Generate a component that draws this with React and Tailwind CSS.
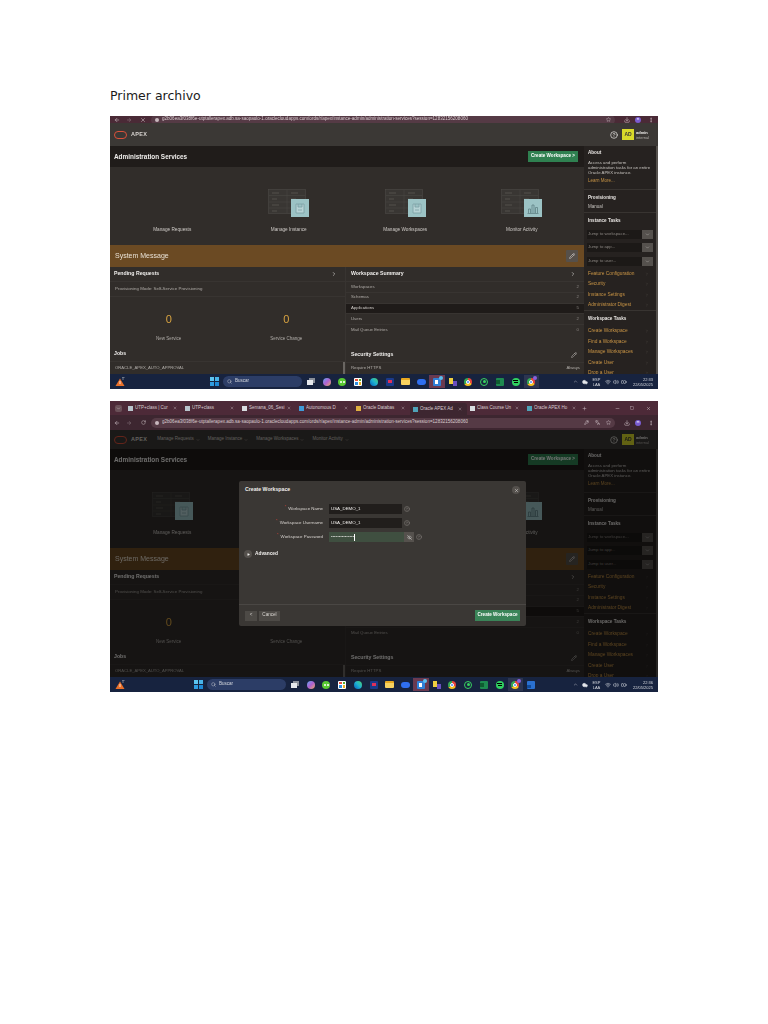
import {
  ArrowLeft, ArrowRight, BatteryCharging, ChevronDown, ChevronRight, ChevronUp, CircleHelp, Cloud,
  Download, EllipsisVertical, EyeOff, KeyRound, Languages, Minus, Pencil, Play, Plus, RotateCw,
  Search, Square, Star, Volume2, Wifi, X,
} from 'lucide-react';

const URL_TEXT = 'g2b06ea3f038f6e-utptallerapex.adb.sa-saopaulo-1.oraclecloudapps.com/ords/r/apex/instance-admin/administration-services?session=12832156208060';

const TABS = [
  { title: 'UTP+class | Cur', color: 'bg-[#b8c4cc]' },
  { title: 'UTP+class', color: 'bg-[#b8c4cc]' },
  { title: 'Semana_06_Sesi', color: 'bg-[#d8dde0]' },
  { title: 'Autonomous D', color: 'bg-[#3f9bd8]' },
  { title: 'Oracle Databas', color: 'bg-[#e0b040]' },
  { title: 'Oracle APEX Ad', color: 'bg-[#4fa3b8]', active: true },
  { title: 'Class Course Un', color: 'bg-[#d8dde0]' },
  { title: 'Oracle APEX Ho', color: 'bg-[#4fa3b8]' },
];

const SIDE_LINKS = ['Feature Configuration', 'Security', 'Instance Settings', 'Administrator Digest'];
const WORKSPACE_LINKS = ['Create Workspace', 'Find a Workspace', 'Manage Workspaces', 'Create User', 'Drop a User'];
const SUMMARY = [
  { label: 'Workspaces', value: 2 },
  { label: 'Schemas', value: 2 },
  { label: 'Applications', value: 5, active: true },
  { label: 'Users', value: 2 },
  { label: 'Mail Queue Entries', value: 0 },
];

function Thumb({ variant, hidden }) {
  return (
    <svg width="41" height="28" viewBox="0 0 41 28" className={hidden ? 'opacity-0' : ''}>
      <rect x="0.5" y="0.5" width="37" height="24" fill="#393633" stroke="#4d4a46" strokeWidth="0.6" />
      <path d="M1 6.5H37M1 13H37M1 19H37M19 1V24" stroke="#4d4a46" strokeWidth="0.5" />
      <path d="M4 4H11M4 10H9M4 16H11M4 22H9M23 4H30M23 10H28M23 16H31" stroke="#5f5b57" strokeWidth="0.7" />
      <rect x="23" y="10" width="18" height="18" fill="#9cc3c5" />
      {variant === 'chart' ? (
        <path d="M27.5 24V20H29.5V24M31 24V16H33V24M34.5 24V18.5H36.5V24M26.5 24.5H37.5" fill="none" stroke="#5f8285" strokeWidth="0.8" />
      ) : (
        <path d="M28 15H36V24H28ZM30 15V18H34V15M30 21H34" fill="#b6d3d5" stroke="#7ba0a3" strokeWidth="0.8" />
      )}
    </svg>
  );
}

function AppIcon({ kind }) {
  if (kind === 'view') return <div className="relative h-[7px] w-[8px]"><div className="absolute left-[2px] top-0 h-[5px] w-[6px] bg-[#8a8f99]" /><div className="absolute bottom-0 left-0 h-[5px] w-[6px] bg-[#e6e8ec]" /></div>;
  if (kind === 'copilot') return <div className="h-[8px] w-[8px] rounded-full bg-gradient-to-br from-[#3fa0f0] via-[#b060d0] to-[#f0a040]" />;
  if (kind === 'owl') return <div className="flex h-[8px] w-[8px] items-center justify-center gap-[1px] rounded-full bg-[#58c832]"><span className="h-[2px] w-[2px] rounded-full bg-white" /><span className="h-[2px] w-[2px] rounded-full bg-white" /></div>;
  if (kind === 'store') return <div className="grid h-[8px] w-[8px] grid-cols-2 gap-[1px] rounded-[1px] bg-white p-[1px]"><span className="bg-[#e8503a]" /><span className="bg-[#58b030]" /><span className="bg-[#3090e0]" /><span className="bg-[#f0b020]" /></div>;
  if (kind === 'edge') return <div className="h-[8px] w-[8px] rounded-full bg-gradient-to-tr from-[#1060c0] via-[#20b0d0] to-[#50d060]" />;
  if (kind === 'jet') return <div className="flex h-[8px] w-[8px] items-center justify-center rounded-[1px] bg-[#1b3a8a]"><span className="h-[3px] w-[4px] bg-[#e0305a]" /></div>;
  if (kind === 'folder') return <div className="h-[7px] w-[9px] rounded-[1px] border-t-2 border-[#e8a820] bg-[#f8d260]" />;
  if (kind === 'zoom') return <div className="h-[6px] w-[9px] rounded-full bg-[#2f6ff0]" />;
  if (kind === 'teams') return <div className="relative flex h-[8px] w-[8px] items-center justify-center rounded-[1px] bg-[#2f80d8]"><span className="h-[4px] w-[3px] bg-white" /><span className="absolute -right-[2px] -top-[2px] h-[4px] w-[4px] rounded-full bg-[#5cc0f0]" /></div>;
  if (kind === 'sticky') return <div className="relative h-[8px] w-[8px]"><div className="absolute left-0 top-0 h-[6px] w-[4px] bg-[#f0d040]" /><div className="absolute bottom-0 right-0 h-[5px] w-[4px] bg-[#6a50c0]" /></div>;
  if (kind === 'chrome' || kind === 'chromeProfile') return <div className="relative h-[8px] w-[8px] rounded-full bg-[conic-gradient(#e8453c_0_33%,#f4c020_33%_66%,#34a853_66%)]"><div className="absolute left-[2px] top-[2px] h-[4px] w-[4px] rounded-full border border-white bg-[#4285f4]" />{kind === 'chromeProfile' && <span className="absolute -right-[2px] -top-[2px] h-[4px] w-[4px] rounded-full bg-[#8a60e0]" />}</div>;
  if (kind === 'whats') return <div className="flex h-[8px] w-[8px] items-center justify-center rounded-full border border-[#38d060]"><span className="h-[3px] w-[3px] rounded-full bg-[#38d060]" /></div>;
  if (kind === 'excel') return <div className="relative h-[8px] w-[8px] rounded-[1px] bg-[#1e8a50]"><span className="absolute left-0 top-[2px] h-[4px] w-[4px] bg-[#0e5c30]" /></div>;
  if (kind === 'spotify') return <div className="flex h-[8px] w-[8px] flex-col items-center justify-center gap-[1px] rounded-full bg-[#30d060]"><span className="h-[0.6px] w-[5px] bg-black" /><span className="h-[0.6px] w-[4px] bg-black" /></div>;
  return <div className="relative h-[8px] w-[8px] rounded-[1px] bg-[#2a70d0]"><span className="absolute bottom-[1px] left-0 h-[3px] w-[4px] bg-[#104a9a]" /></div>;
}

const APPS = ['view', 'copilot', 'owl', 'store', 'edge', 'jet', 'folder', 'zoom', 'teams', 'sticky', 'chrome', 'whats', 'excel', 'spotify', 'chromeProfile'];

function Taskbar({ startGap, time, extraApp }) {
  const apps = extraApp ? [...APPS, 'word'] : APPS;
  return (
    <div className="flex h-[15px] items-center bg-[#17233f] text-[#d5d8de]">
      <svg width="10" height="10" viewBox="0 0 10 10" className="ml-[5px] shrink-0">
        <path d="M5 1.5L9.5 9H0.5Z" fill="#e8702a" />
        <path d="M5 4V7" stroke="#fff" strokeWidth="0.8" />
        <path d="M7 0.5H9.5M7 2H9" stroke="#c8ccd4" strokeWidth="0.5" />
      </svg>
      <div className={`grid h-[9px] w-[9px] shrink-0 grid-cols-2 gap-[0.5px] ${startGap}`}>
        <span className="bg-[#5cc4f0]" /><span className="bg-[#48b4ea]" /><span className="bg-[#2f9ce0]" /><span className="bg-[#1e88d4]" />
      </div>
      <div className="ml-[4px] flex h-[11px] w-[79px] shrink-0 items-center gap-[3px] rounded-full bg-[#2c3d66] pl-[4px] text-[4.5px]">
        <Search size={5} />
        <span>Buscar</span>
      </div>
      <div className="ml-[1px] flex shrink-0">
        {apps.map((app, i) => (
          <div key={i} className={`flex h-[13px] w-[15.75px] items-center justify-center ${app === 'teams' ? 'bg-[#6a3a50]' : ''} ${app === 'chromeProfile' ? 'bg-[#2c3550]' : ''}`}>
            <AppIcon kind={app} />
          </div>
        ))}
      </div>
      <div className="ml-auto flex items-center pr-[5px]">
        <ChevronUp size={5} className="mr-[4px]" />
        <Cloud size={6} fill="#e5e7eb" className="mr-[4px]" />
        <div className="mr-[4px] w-[9px] text-center text-[4px] leading-[5px]">ESP<br />LAA</div>
        <Wifi size={6} className="mr-[2px]" />
        <Volume2 size={6} className="mr-[2px]" />
        <BatteryCharging size={6} className="mr-[6px]" />
        <div className="text-right text-[4px] leading-[5px]">{time}<br />22/05/2025</div>
      </div>
    </div>
  );
}

function BrowserTabs() {
  return (
    <div className="flex h-[14px] items-center bg-[#4d2a38] pl-[5px] text-[4.5px] text-[#d9ccd0]">
      <div className="mr-[3px] flex h-[7px] w-[7px] items-center justify-center rounded-[2px] bg-[#6a5058]"><ChevronDown size={5} /></div>
      {TABS.map((tab) => (
        <div key={tab.title} className={`flex h-[12px] w-[57px] shrink-0 items-center gap-[2px] rounded-t-[3px] px-[3px] ${tab.active ? 'mt-[2px] bg-[#3d2630]' : ''}`}>
          <span className={`h-[5px] w-[5px] shrink-0 ${tab.color}`} />
          <span className="flex-1 truncate">{tab.title}</span>
          <X size={4} className="mr-[2px] shrink-0" />
        </div>
      ))}
      <Plus size={5} className="ml-[1px]" />
      <Minus size={5} className="ml-[28px]" />
      <Square size={4} className="ml-[10px]" />
      <X size={5} className="ml-[12px]" />
    </div>
  );
}

function AddressBar({ height, showExtras, navIcon, barColor }) {
  return (
    <div className={`flex items-center overflow-hidden pl-[3px] pr-[4px] text-[#d9ccd0] ${height} ${barColor}`}>
      <ArrowLeft size={6} className="ml-[1px]" />
      <ArrowRight size={6} className="ml-[6px] opacity-50" />
      {navIcon === 'close' ? <X size={6} className="ml-[8px]" /> : <RotateCw size={5} className="ml-[9px]" />}
      <div className="ml-[5px] flex h-[10px] w-[464px] shrink-0 items-center rounded-full bg-[#553a45] pl-[4px] text-[4.55px]">
        <span className="mr-[3px] h-[4px] w-[4px] rounded-full bg-[#c8b8be]" />
        <span className="truncate whitespace-nowrap">{URL_TEXT}</span>
        <div className="ml-auto flex items-center gap-[6px] pr-[4px]">
          {showExtras && <KeyRound size={5} />}
          {showExtras && <Languages size={5} />}
          <Star size={5} />
        </div>
      </div>
      <Download size={6} className="ml-[9px]" />
      <span className="ml-[5px] flex h-[6px] w-[6px] items-center justify-center rounded-full bg-[#7a5cd0] text-[3px] text-white">m</span>
      <EllipsisVertical size={6} className="ml-auto" />
    </div>
  );
}

function ApexHeader({ height, menu }) {
  return (
    <div className={`flex items-center bg-[#3b3835] pl-[4px] pr-[6px] text-[#f0eeec] ${height}`}>
      <div className="h-[8px] w-[13px] rounded-[4px] border-[1.3px] border-[#d9503a]" />
      <span className="ml-[4px] text-[5.5px] font-bold tracking-[0.3px] text-[#d8d4d0]">APEX</span>
      {menu && (
        <div className="ml-[10px] flex gap-[8px] text-[4.5px] text-[#d0ccc8]">
          {['Manage Requests', 'Manage Instance', 'Manage Workspaces', 'Monitor Activity'].map((item) => (
            <span key={item} className="flex items-center gap-[2px]">{item}<ChevronDown size={4} /></span>
          ))}
        </div>
      )}
      <div className="ml-auto flex items-center">
        <CircleHelp size={8} />
        <div className="ml-[4px] flex h-[11px] w-[12px] items-center justify-center bg-[#d9d92a] text-[5px] font-bold text-[#3b3835]">AD</div>
        <div className="ml-[2px] w-[16px] text-[4px] leading-[5px]">
          <div className="font-bold">admin</div>
          <div className="text-[#b0aca8]">internal</div>
        </div>
      </div>
    </div>
  );
}

function SideLink({ label }) {
  return (
    <div className="flex h-[10.5px] items-center justify-between pr-[3px] text-[4.8px] text-[#c89445]">
      <span>{label}</span>
      <ChevronRight size={4} className="text-[#5a5652]" />
    </div>
  );
}

function Sidebar() {
  return (
    <div className="h-full w-[72px] shrink-0 overflow-hidden bg-[#262220] text-[#e8e5e2]">
      <div className="h-[44px] border-b border-[#383431] px-[4px] pt-[4px]">
        <div className="h-[6px] text-[4.6px] font-bold leading-[6px]">About</div>
        <div className="mt-[3.5px] h-[16px] whitespace-nowrap text-[4.3px] leading-[5.3px] text-[#c4c0bc]">Access and perform<br />administration tasks for an entire<br />Oracle APEX instance.</div>
        <div className="mt-[2.5px] h-[6px] text-[4.5px] leading-[6px] text-[#c89445]">Learn More...</div>
      </div>
      <div className="h-[23px] border-b border-[#383431] px-[4px] pt-[4.5px]">
        <div className="h-[6px] text-[4.6px] font-bold leading-[6px]">Provisioning</div>
        <div className="mt-[3.5px] h-[6px] text-[4.5px] leading-[6px] text-[#c4c0bc]">Manual</div>
      </div>
      <div className="h-[98px] border-b border-[#383431] px-[4px] pt-[5px]">
        <div className="h-[6px] text-[4.6px] font-bold leading-[6px]">Instance Tasks</div>
        <div className="mt-[5.5px] flex flex-col gap-[4.5px]">
          {['Jump to workspace...', 'Jump to app...', 'Jump to user...'].map((item) => (
            <div key={item} className="-ml-[1px] flex h-[9px] w-[66px] items-center bg-[#1c1917] pl-[1px] text-[4.3px] text-[#8a8580]">
              <span className="flex-1">{item}</span>
              <div className="flex h-full w-[11px] items-center justify-center bg-[#55514d] text-[#c8c4c0]"><ChevronDown size={5} /></div>
            </div>
          ))}
        </div>
        <div className="mt-[2.75px]">
          {SIDE_LINKS.map((item) => <SideLink key={item} label={item} />)}
        </div>
      </div>
      <div className="px-[4px] pt-[5px]">
        <div className="h-[6px] text-[4.6px] font-bold leading-[6px]">Workspace Tasks</div>
        <div className="mt-[3.75px]">
          {WORKSPACE_LINKS.map((item) => <SideLink key={item} label={item} />)}
        </div>
      </div>
    </div>
  );
}

function PanelHeader({ title, chevron }) {
  return (
    <div className="flex h-[15px] items-center justify-between border-b border-[#383431] pl-[4px] pr-[8px] text-[5.2px] font-bold text-[#f0eeec]">
      <span>{title}</span>
      {chevron && <ChevronRight size={6} />}
    </div>
  );
}

function Counter({ label }) {
  return (
    <div className="flex flex-1 flex-col items-center pt-[15px]">
      <div className="h-[14px] text-[11px] font-medium leading-[14px] text-[#d9a441]">0</div>
      <div className="mt-[10px] text-[4.5px] leading-[6px] text-[#b0aca8]">{label}</div>
    </div>
  );
}

function ApexBody({ firstThumb }) {
  return (
    <div className="flex h-[228px] bg-[#312d2a]">
      <div className="flex w-[474px] shrink-0 flex-col">
        <div className="flex h-[21px] shrink-0 items-center justify-between bg-[#201c1a] pl-[4px] pr-[6px]">
          <span className="text-[6.4px] font-bold text-[#f0eeec]">Administration Services</span>
          <div className="flex h-[11px] w-[50px] items-center justify-center bg-[#2f8050] text-[4.6px] font-bold text-white">Create Workspace &gt;</div>
        </div>
        <div className="grid h-[78px] shrink-0 grid-cols-4 px-[4px] pt-[22px]">
          {[
            { label: 'Manage Requests', hidden: !firstThumb },
            { label: 'Manage Instance' },
            { label: 'Manage Workspaces' },
            { label: 'Monitor Activity', variant: 'chart' },
          ].map((card) => (
            <div key={card.label} className="flex flex-col items-center">
              <Thumb variant={card.variant} hidden={card.hidden} />
              <div className="mt-[9.5px] text-[4.7px] leading-[6px] text-[#cfcbc7]">{card.label}</div>
            </div>
          ))}
        </div>
        <div className="flex h-[22px] shrink-0 items-center justify-between bg-[#6b4a23] pl-[5px] pr-[6px]">
          <span className="text-[7px] text-[#e8e0d4]">System Message</span>
          <div className="flex h-[12px] w-[12px] items-center justify-center rounded-[1px] bg-[#56504a] text-[#e8e5e2]"><Pencil size={6} /></div>
        </div>
        <div className="flex flex-1">
          <div className="relative w-[236px] shrink-0 border-r border-[#383431]">
            <PanelHeader title="Pending Requests" chevron />
            <div className="flex h-[15px] items-center border-b border-[#383431] pl-[5px] text-[4.4px] text-[#b0aca8]">Provisioning Mode: Self-Service Provisioning</div>
            <div className="flex h-[50px]">
              <Counter label="New Service" />
              <Counter label="Service Change" />
            </div>
            <PanelHeader title="Jobs" />
            <div className="flex h-[12px] items-center pl-[5px] text-[4.2px] text-[#b0aca8]">ORACLE_APEX_AUTO_APPROVAL</div>
            <div className="absolute bottom-0 right-0 h-[12px] w-[2px] bg-[#6a6662]" />
          </div>
          <div className="flex-1">
            <div className="flex h-[14px] items-center justify-between pl-[5px] pr-[8px] text-[5.2px] font-bold text-[#f0eeec]">
              <span>Workspace Summary</span>
              <ChevronRight size={6} />
            </div>
            {SUMMARY.map((row) => (
              <div key={row.label} className={`flex h-[10.75px] items-center justify-between border-t border-[#383431] pl-[5px] pr-[5px] text-[4.3px] ${row.active ? 'bg-[#1f1b19] text-[#d0ccc8]' : 'text-[#b0aca8]'}`}>
                <span>{row.label}</span>
                <span className="text-[#8a8580]">{row.value}</span>
              </div>
            ))}
            <div className="h-[12.25px]" />
            <div className="flex h-[15px] items-center justify-between pl-[5px] pr-[7px] text-[5.2px] font-bold text-[#f0eeec]">
              <span>Security Settings</span>
              <Pencil size={6} className="text-[#c8c4c0]" />
            </div>
            <div className="flex h-[12px] items-center justify-between border-t border-[#383431] pl-[5px] pr-[4px] text-[4.3px] text-[#b0aca8]">
              <span>Require HTTPS</span>
              <span>Always</span>
            </div>
          </div>
        </div>
      </div>
      <Sidebar />
      <div className="w-[2px] shrink-0 bg-[#55514d]" />
    </div>
  );
}

function ModalField({ label, value, filled, password }) {
  return (
    <div className="flex h-[14px] items-center">
      <div className="w-[90px] pr-[6px] text-right text-[4.4px] text-[#d8d4d0]">
        <span className="mr-[2px] align-super text-[4px] text-[#d9443a]">*</span>
        {label}
      </div>
      <div className={`flex h-[10px] items-center pl-[2px] text-[4.4px] text-[#f0eeec] ${filled ? 'w-[75px] bg-[#3f4f40]' : 'w-[73px] bg-[#211e1c]'}`}>
        {value}
        {password && <span className="h-[7px] w-[0.5px] bg-white" />}
      </div>
      {password && (
        <div className="flex h-[10px] w-[10px] items-center justify-center bg-[#55514d] text-[#e0ddda]"><EyeOff size={5} /></div>
      )}
      <CircleHelp size={6} className="ml-[2px] text-[#8a8580]" />
    </div>
  );
}

function CreateWorkspaceModal() {
  return (
    <div className="absolute left-[129px] top-[51px] flex h-[145px] w-[287px] flex-col rounded-[2px] bg-[#3a3734]">
      <div className="flex h-[18px] shrink-0 items-center justify-between px-[6px] text-[5.2px] font-bold text-[#f0eeec]">
        <span>Create Workspace</span>
        <div className="flex h-[8px] w-[8px] items-center justify-center rounded-full bg-[#55514d]"><X size={5} /></div>
      </div>
      <div className="pt-[3px]">
        <ModalField label="Workspace Name" value="USA_DEMO_1" />
        <ModalField label="Workspace Username" value="USA_DEMO_1" />
        <ModalField label="Workspace Password" value="•••••••••••••••" filled password />
      </div>
      <div className="mt-[6px] flex items-center gap-[3px] pl-[5px] text-[4.8px] font-bold text-[#f0eeec]">
        <div className="flex h-[8px] w-[8px] items-center justify-center rounded-full bg-[#55514d]"><Play size={3} fill="currentColor" /></div>
        Advanced
      </div>
      <div className="mt-auto flex h-[22px] items-center justify-between border-t border-[#4a4744] px-[6px]">
        <div className="flex gap-[2px] text-[4.6px] text-[#d8d4d0]">
          <div className="flex h-[10px] w-[12px] items-center justify-center bg-[#4d4a46]">&lt;</div>
          <div className="flex h-[10px] w-[21px] items-center justify-center bg-[#4d4a46]">Cancel</div>
        </div>
        <div className="flex h-[11px] w-[45px] items-center justify-center bg-[#3a8458] text-[4.6px] font-bold text-white">Create Workspace</div>
      </div>
    </div>
  );
}

export default function App() {
  return (
    <div className="h-[1024px] overflow-hidden bg-white pl-[110px] pt-[87px] font-['Liberation_Sans',sans-serif]">
      <h1 className="h-[17px] font-['DejaVu_Sans',sans-serif] text-[12.5px] leading-[17px] text-[#1a1a1a]">Primer archivo</h1>

      {/* first capture */}
      <div className="mt-[12px] w-[548px] overflow-hidden blur-[0.4px]">
        <AddressBar height="h-[7px]" navIcon="close" barColor="bg-[#4a2a36]" />
        <ApexHeader height="h-[23px]" />
        <ApexBody />
        <Taskbar startGap="ml-[85px]" time="22:33" />
      </div>

      {/* second capture, with the dialog open */}
      <div className="mt-[12px] w-[548px] overflow-hidden blur-[0.4px]">
        <BrowserTabs />
        <AddressBar height="h-[15px]" barColor="bg-[#3d2630]" showExtras />
        <div className="relative">
          <ApexHeader height="h-[19px]" menu />
          <ApexBody firstThumb />
          <div className="absolute inset-0 bg-black/55" />
          <CreateWorkspaceModal />
        </div>
        <Taskbar startGap="ml-[69px]" time="22:36" extraApp />
      </div>
    </div>
  );
}
